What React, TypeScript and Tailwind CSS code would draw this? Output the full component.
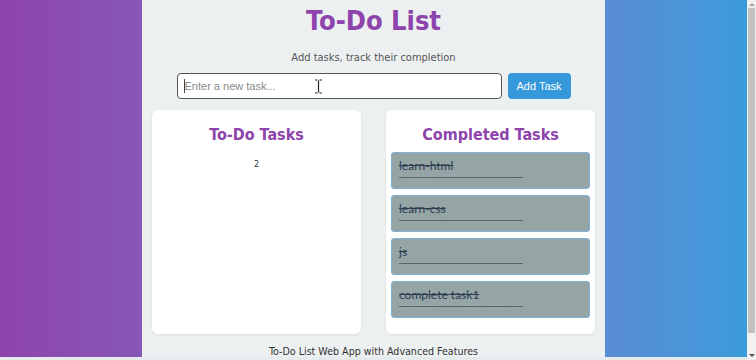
const completed = ['learn-html', 'learn-css', 'js', 'complete task1'];

function IBeam() {
  return (
    <svg width="9" height="15" viewBox="0 0 9 15" className="absolute left-[137px] top-[6px]">
      <path d="M1 1h2.5M5.5 1H8M4.5 1.5v12M1 14h2.5M5.5 14H8" stroke="#fff" strokeWidth="3" fill="none" />
      <path d="M1 1h2.5M5.5 1H8M4.5 1.5v12M1 14h2.5M5.5 14H8" stroke="#222" strokeWidth="1.2" fill="none" />
    </svg>
  );
}

export default function App() {
  return (
    <div className="flex h-[360px] w-[756px] overflow-hidden font-['DejaVu_Sans_Condensed','DejaVu_Sans',sans-serif]">
      <div className="flex flex-1 flex-col">
        <div className="flex h-[357px] justify-center overflow-hidden bg-gradient-to-r from-[#8e44ad] to-[#3a9bdc]">
          <div className="flex w-[463px] flex-col items-center bg-[#ecf0f1] px-[10px]">
            <h1 className="mt-[5px] h-[32px] text-[27px] font-bold leading-[32px] text-[#8e44ad]">To-Do List</h1>
            <p className="mt-[14px] text-[11px] leading-[14px] text-[#555]">Add tasks, track their completion</p>
            <div className="mt-[8px] flex gap-[6px]">
              <div className="relative">
                <input
                  className="h-[26px] w-[325px] rounded-[4px] border border-[#555] bg-white px-[7px] font-['Liberation_Sans',sans-serif] text-[11px] outline-none placeholder:text-[#8a8a8a]"
                  placeholder="Enter a new task..."
                />
                <div className="absolute left-[7px] top-[6px] h-[14px] w-px bg-[#444]" />
                <IBeam />
              </div>
              <button className="h-[26px] w-[63px] rounded-[4px] bg-[#3498db] font-['Liberation_Sans',sans-serif] text-[11px] text-white">
                Add Task
              </button>
            </div>
            <div className="mt-[11px] flex gap-[25px]">
              <section className="flex h-[224px] w-[209px] shrink-0 flex-col items-center rounded-[6px] bg-white shadow-[0_1px_3px_rgba(0,0,0,0.08)]">
                <h2 className="mt-[15px] text-[16px] font-bold leading-[20px] text-[#8e44ad]">To-Do Tasks</h2>
                <div className="mt-[13px] text-[9px] text-[#333]">2</div>
              </section>
              <section className="flex h-[224px] w-[209px] shrink-0 flex-col rounded-[6px] bg-white px-[5px] shadow-[0_1px_3px_rgba(0,0,0,0.08)]">
                <h2 className="mt-[15px] self-center text-[16px] font-bold leading-[20px] text-[#8e44ad]">Completed Tasks</h2>
                <ul className="mt-[7px] flex flex-col gap-[6px]">
                  {completed.map((t) => (
                    <li
                      key={t}
                      className="flex h-[37px] flex-col rounded-[3px] border border-[#7fb3d5] bg-[#95a5a6] px-[7px] pt-[5px] font-['Lato',sans-serif]"
                    >
                      <span className="text-[12px] leading-[15px] text-[#2c3e50] line-through">{t}</span>
                      <span className="text-[7px] leading-[9px] text-[#9aabac] line-through decoration-[#566]">
                        Completed on 12/3/2023, 10:45:21 AM
                      </span>
                    </li>
                  ))}
                </ul>
              </section>
            </div>
            <footer className="mt-[10px] text-[10.6px] leading-[14px] text-[#333]">To-Do List Web App with Advanced Features</footer>
          </div>
        </div>
        <div className="h-[3px] bg-[#e6ecee]" />
      </div>
      <div className="flex w-[9px] flex-col items-center bg-[#f1f1f1]">
        <div className="mt-[3px] h-0 w-0 border-x-[3px] border-b-[3px] border-x-transparent border-b-[#a3a3a3]" />
        <div className="mt-[2px] h-[325px] w-[7px] bg-[#c1c1c1]" />
        <div className="mt-auto mb-[3px] h-0 w-0 border-x-[3px] border-t-[3px] border-x-transparent border-t-[#505050]" />
      </div>
    </div>
  );
}
